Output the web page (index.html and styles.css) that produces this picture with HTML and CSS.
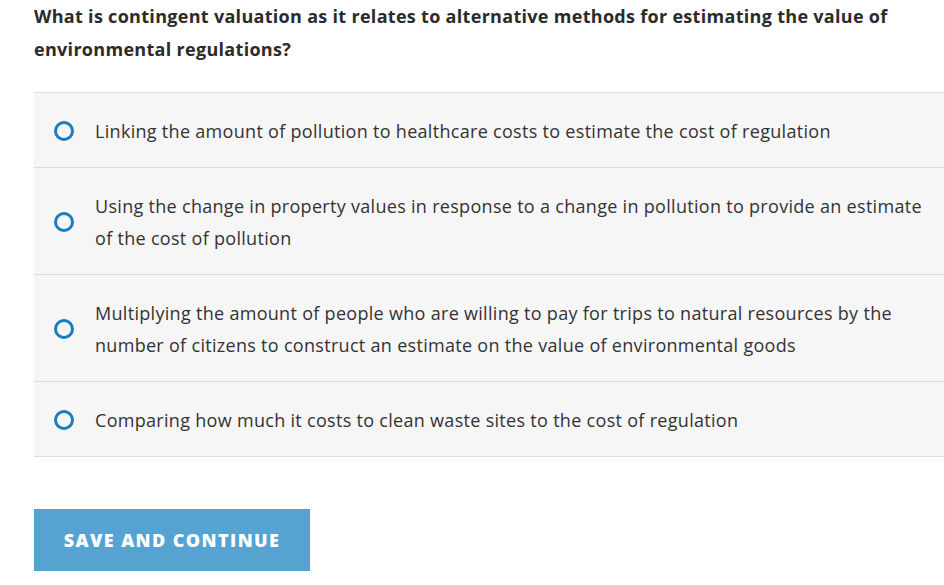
FILE: index.html
```html
<!DOCTYPE html>
<html>
<head>
<meta charset="utf-8">
<link rel="stylesheet" href="styles.css">
</head>
<body>
<div class="page">
  <h1 class="question">What is contingent valuation as it relates to alternative methods for estimating the value of environmental regulations?</h1>
  <div class="options">
    <label class="option"><span class="radio"></span><span class="text">Linking the amount of pollution to healthcare costs to estimate the cost of regulation</span></label>
    <label class="option"><span class="radio"></span><span class="text">Using the change in property values in response to a change in pollution to provide an estimate of the cost of pollution</span></label>
    <label class="option"><span class="radio"></span><span class="text">Multiplying the amount of people who are willing to pay for trips to natural resources by the number of citizens to construct an estimate on the value of environmental goods</span></label>
    <label class="option"><span class="radio"></span><span class="text">Comparing how much it costs to clean waste sites to the cost of regulation</span></label>
  </div>
  <button class="save">SAVE AND CONTINUE</button>
</div>
</body>
</html>
```
FILE: styles.css
```css
html, body {
  margin: 0;
  padding: 0;
  background: #fff;
}
body {
  font-family: "Open Sans", "Lato", sans-serif;
  color: #2b2b2b;
}
.page {
  padding: 0 0 0 34px;
}
.question {
  margin: 0;
  padding-top: 0;
  font-size: 18px;
  font-weight: 700;
  letter-spacing: 0.3px;
  line-height: 33px;
  color: #2b2b2b;
  padding-right: 40px;
}
.options {
  margin-top: 26px;
  border-top: 1px solid #dddddd;
}
.option {
  display: flex;
  align-items: center;
  background: #f6f6f6;
  border-bottom: 1px solid #dddddd;
  padding: 22px 12px 20px 20px;
}
.radio {
  flex: none;
  width: 14px;
  height: 14px;
  border: 3px solid #1a7cc0;
  border-radius: 50%;
  margin-right: 21px;
}
.text {
  font-size: 18px;
  letter-spacing: 0.3px;
  line-height: 32px;
  color: #333;
}
.save {
  margin-top: 52px;
  width: 276px;
  height: 62px;
  border: none;
  background: #56a3d2;
  color: #fff;
  font-family: "Open Sans", sans-serif;
  font-weight: 800;
  font-size: 18px;
  letter-spacing: 1.4px;
  padding: 0;
}
```
